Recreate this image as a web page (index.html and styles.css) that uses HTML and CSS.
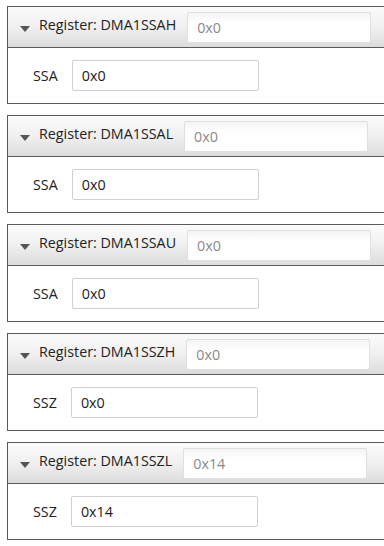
FILE: index.html
```html
<!DOCTYPE html>
<html>
<head>
<meta charset="utf-8">
<link rel="stylesheet" href="styles.css">
</head>
<body>
<div class="list">
  <section class="panel">
    <div class="head">
      <span class="tri"></span>
      <span class="title">Register: DMA1SSAH</span>
      <span class="hinput">0x0</span>
    </div>
    <div class="body">
      <span class="label">SSA</span>
      <span class="binput">0x0</span>
    </div>
  </section>
  <section class="panel">
    <div class="head">
      <span class="tri"></span>
      <span class="title">Register: DMA1SSAL</span>
      <span class="hinput">0x0</span>
    </div>
    <div class="body">
      <span class="label">SSA</span>
      <span class="binput">0x0</span>
    </div>
  </section>
  <section class="panel">
    <div class="head">
      <span class="tri"></span>
      <span class="title">Register: DMA1SSAU</span>
      <span class="hinput">0x0</span>
    </div>
    <div class="body">
      <span class="label">SSA</span>
      <span class="binput">0x0</span>
    </div>
  </section>
  <section class="panel">
    <div class="head">
      <span class="tri"></span>
      <span class="title">Register: DMA1SSZH</span>
      <span class="hinput">0x0</span>
    </div>
    <div class="body">
      <span class="label">SSZ</span>
      <span class="binput">0x0</span>
    </div>
  </section>
  <section class="panel">
    <div class="head">
      <span class="tri"></span>
      <span class="title">Register: DMA1SSZL</span>
      <span class="hinput">0x14</span>
    </div>
    <div class="body">
      <span class="label">SSZ</span>
      <span class="binput">0x14</span>
    </div>
  </section>
</div>
</body>
</html>
```
FILE: styles.css
```css
html, body {
  margin: 0;
  padding: 0;
  background: #ffffff;
}
body {
  font-family: "Open Sans", "Noto Sans", sans-serif;
  font-size: 14.3px;
  color: #222;
}
.list {
  padding: 6px 0 0 7px;
  display: flex;
  flex-direction: column;
  gap: 11px;
}
.panel {
  border: 1px solid #5a5a5a;
  border-right: none;
  background: #fff;
}
.head {
  height: 40px;
  border-bottom: 1px solid #5a5a5a;
  background: linear-gradient(#fbfbfb, #f0f0f0 50%, #dcdcdc);
  display: flex;
  align-items: center;
}
.tri {
  flex: none;
  width: 0;
  height: 0;
  margin-left: 12px;
  margin-top: 4px;
  border-left: 5px solid transparent;
  border-right: 5px solid transparent;
  border-top: 6px solid #555;
}
.title {
  flex: none;
  margin-left: 9px;
  margin-top: -6px;
  color: #222;
}
.hinput {
  flex: none;
  margin-left: 11px;
  width: 184px;
  height: 31px;
  border: 1px solid #e0e0e0;
  border-radius: 2px;
  background: linear-gradient(#f4f4f4, #ffffff 35%);
  color: #8a8a8a;
  display: flex;
  align-items: center;
  padding-left: 9px;
  box-sizing: border-box;
}
.body {
  height: 55px;
  display: flex;
  align-items: center;
}
.label {
  margin-left: 25px;
  margin-right: 14px;
}
.binput {
  width: 187px;
  height: 31px;
  box-sizing: border-box;
  border: 1px solid #d0d0d0;
  border-radius: 2px;
  background: #fff;
  display: flex;
  align-items: center;
  padding-left: 9px;
  color: #222;
}
```
